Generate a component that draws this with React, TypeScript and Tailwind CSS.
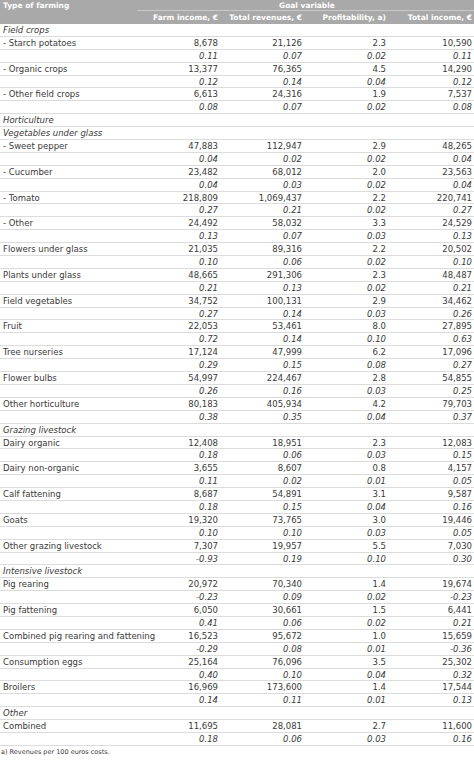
import React from "react"

type Row =
  | { kind: "group"; label: string }
  | { kind: "item"; label: string; values: string[]; ratios: string[] }

const rows: Row[] = [
  { kind: "group", label: "Field crops" },
  { kind: "item", label: "- Starch potatoes", values: ["8,678", "21,126", "2.3", "10,590"], ratios: ["0.11", "0.07", "0.02", "0.11"] },
  { kind: "item", label: "- Organic crops", values: ["13,377", "76,365", "4.5", "14,290"], ratios: ["0.12", "0.14", "0.04", "0.12"] },
  { kind: "item", label: "- Other field crops", values: ["6,613", "24,316", "1.9", "7,537"], ratios: ["0.08", "0.07", "0.02", "0.08"] },
  { kind: "group", label: "Horticulture" },
  { kind: "group", label: "Vegetables under glass" },
  { kind: "item", label: "- Sweet pepper", values: ["47,883", "112,947", "2.9", "48,265"], ratios: ["0.04", "0.02", "0.02", "0.04"] },
  { kind: "item", label: "- Cucumber", values: ["23,482", "68,012", "2.0", "23,563"], ratios: ["0.04", "0.03", "0.02", "0.04"] },
  { kind: "item", label: "- Tomato", values: ["218,809", "1,069,437", "2.2", "220,741"], ratios: ["0.27", "0.21", "0.02", "0.27"] },
  { kind: "item", label: "- Other", values: ["24,492", "58,032", "3.3", "24,529"], ratios: ["0.13", "0.07", "0.03", "0.13"] },
  { kind: "item", label: "Flowers under glass", values: ["21,035", "89,316", "2.2", "20,502"], ratios: ["0.10", "0.06", "0.02", "0.10"] },
  { kind: "item", label: "Plants under glass", values: ["48,665", "291,306", "2.3", "48,487"], ratios: ["0.21", "0.13", "0.02", "0.21"] },
  { kind: "item", label: "Field vegetables", values: ["34,752", "100,131", "2.9", "34,462"], ratios: ["0.27", "0.14", "0.03", "0.26"] },
  { kind: "item", label: "Fruit", values: ["22,053", "53,461", "8.0", "27,895"], ratios: ["0.72", "0.14", "0.10", "0.63"] },
  { kind: "item", label: "Tree nurseries", values: ["17,124", "47,999", "6.2", "17,096"], ratios: ["0.29", "0.15", "0.08", "0.27"] },
  { kind: "item", label: "Flower bulbs", values: ["54,997", "224,467", "2.8", "54,855"], ratios: ["0.26", "0.16", "0.03", "0.25"] },
  { kind: "item", label: "Other horticulture", values: ["80,183", "405,934", "4.2", "79,703"], ratios: ["0.38", "0.35", "0.04", "0.37"] },
  { kind: "group", label: "Grazing livestock" },
  { kind: "item", label: "Dairy organic", values: ["12,408", "18,951", "2.3", "12,083"], ratios: ["0.18", "0.06", "0.03", "0.15"] },
  { kind: "item", label: "Dairy non-organic", values: ["3,655", "8,607", "0.8", "4,157"], ratios: ["0.11", "0.02", "0.01", "0.05"] },
  { kind: "item", label: "Calf fattening", values: ["8,687", "54,891", "3.1", "9,587"], ratios: ["0.18", "0.15", "0.04", "0.16"] },
  { kind: "item", label: "Goats", values: ["19,320", "73,765", "3.0", "19,446"], ratios: ["0.10", "0.10", "0.03", "0.05"] },
  { kind: "item", label: "Other grazing livestock", values: ["7,307", "19,957", "5.5", "7,030"], ratios: ["-0.93", "0.19", "0.10", "0.30"] },
  { kind: "group", label: "Intensive livestock" },
  { kind: "item", label: "Pig rearing", values: ["20,972", "70,340", "1.4", "19,674"], ratios: ["-0.23", "0.09", "0.02", "-0.23"] },
  { kind: "item", label: "Pig fattening", values: ["6,050", "30,661", "1.5", "6,441"], ratios: ["0.41", "0.06", "0.02", "0.21"] },
  { kind: "item", label: "Combined pig rearing and fattening", values: ["16,523", "95,672", "1.0", "15,659"], ratios: ["-0.29", "0.08", "0.01", "-0.36"] },
  { kind: "item", label: "Consumption eggs", values: ["25,164", "76,096", "3.5", "25,302"], ratios: ["0.40", "0.10", "0.04", "0.32"] },
  { kind: "item", label: "Broilers", values: ["16,969", "173,600", "1.4", "17,544"], ratios: ["0.14", "0.11", "0.01", "0.13"] },
  { kind: "group", label: "Other" },
  { kind: "item", label: "Combined", values: ["11,695", "28,081", "2.7", "11,600"], ratios: ["0.18", "0.06", "0.03", "0.16"] },
]

const colW = ["w-[84px]", "w-[84px]", "w-[84px]", "w-[86px]"]

function NumCells({ vals, italic }: { vals: string[]; italic?: boolean }) {
  return (
    <>
      {vals.map((v, i) => (
        <div key={i} className={`${colW[i]} shrink-0 pr-[3px] text-right whitespace-nowrap ${italic ? "italic" : ""}`}>
          {v}
        </div>
      ))}
    </>
  )
}

export default function App() {
  return (
    <div
      className="w-[474px] h-[760px] overflow-hidden bg-white text-[#3a3a3a] text-[8.5px]"
      style={{ fontFamily: '"DejaVu Sans", Verdana, sans-serif' }}
    >
      <div className="w-[560px]">
        {/* header */}
        <div className="bg-[#a9a9a9] text-white font-bold text-[7.5px] h-[24px] flex">
          <div className="w-[137px] shrink-0 pl-[3px] leading-[11px]">Type of farming</div>
          <div className="flex-1 flex flex-col">
            <div className="h-[11px] leading-[11px] border-b border-[#c9c9c9] pl-[142px]">Goal variable</div>
            <div className="flex leading-[13px]">
              <NumCells vals={["Farm income, €", "Total revenues, €", "Profitability, a)", "Total income, €"]} />
            </div>
          </div>
        </div>

        {rows.map((r, idx) =>
          r.kind === "group" ? (
            <div key={idx} className="h-[12.9px] leading-[12.9px] border-b border-[#dcdcdc] italic pl-[3px]">
              {r.label}
            </div>
          ) : (
            <React.Fragment key={idx}>
              <div className="h-[12.9px] leading-[12.9px] border-b border-[#dcdcdc] flex">
                <div className="w-[137px] shrink-0 pl-[3px] whitespace-nowrap">{r.label}</div>
                <NumCells vals={r.values} />
              </div>
              <div className="h-[12.9px] leading-[12.9px] border-b border-[#dcdcdc] flex">
                <div className="w-[137px] shrink-0" />
                <NumCells vals={r.ratios} italic />
              </div>
            </React.Fragment>
          )
        )}

        <div className="text-[6.5px] leading-[9px] pt-[2px] pl-[1px]">a) Revenues per 100 euros costs.</div>
      </div>
    </div>
  )
}
